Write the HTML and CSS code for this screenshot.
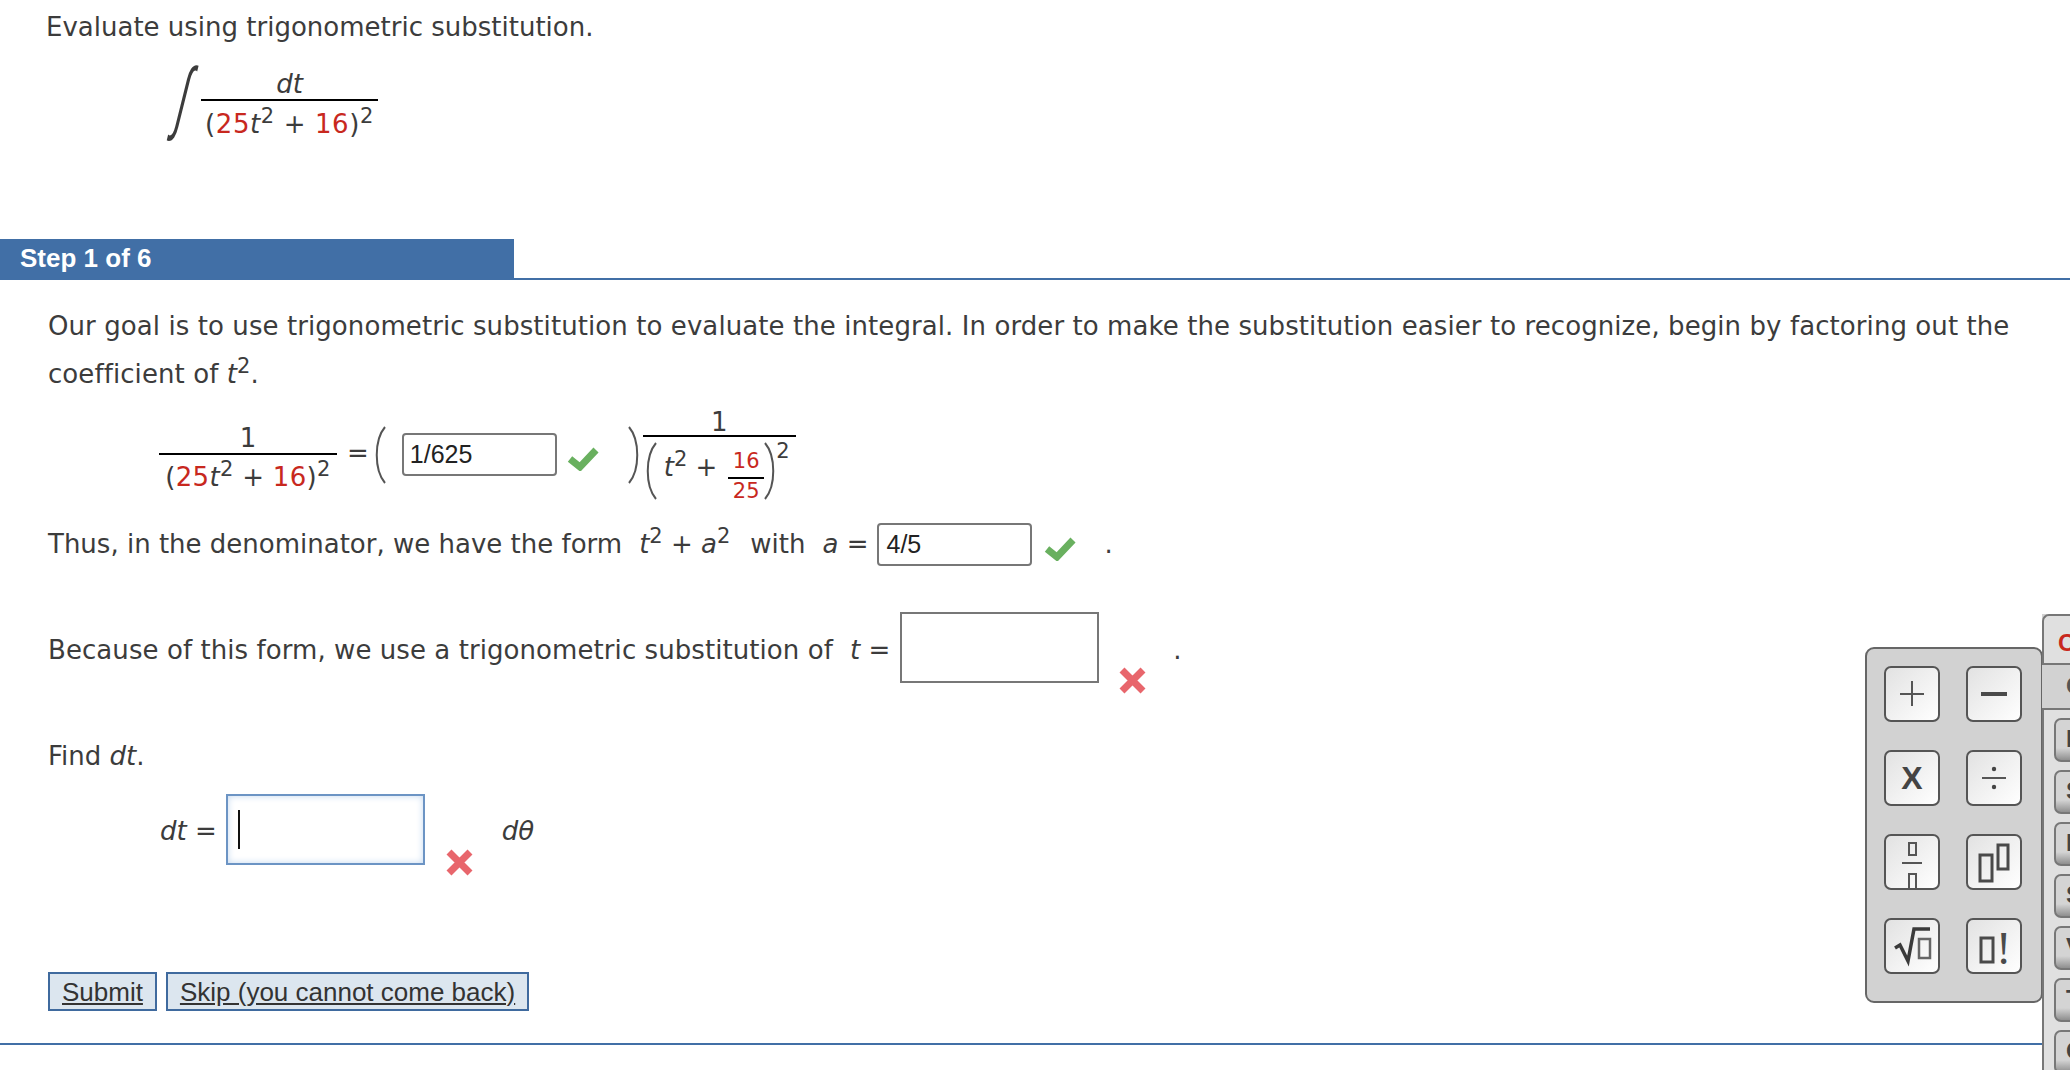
FILE: index.html
```html
<!DOCTYPE html>
<html lang="en">
  <head>
    <meta charset="UTF-8" />
    <meta name="viewport" content="width=device-width, initial-scale=1.0" />
    <title>Evaluate using trigonometric substitution</title>
    <link rel="stylesheet" href="styles.css">
  </head>

  <body>
    <div class="page">
      <p class="prompt">Evaluate using trigonometric substitution.</p>
      <div class="integral-row">
        <span class="integral">∫</span>
        <div class="frac frac-prompt">
          <div class="num"><i>dt</i></div>
          <div class="den">(<span class="red">25</span><i>t</i><sup>2</sup> + <span class="red">16</span>)<sup>2</sup></div>
        </div>
      </div>

      <div class="step-head"><div class="step-title">Step 1 of 6</div></div>

      <p class="goal">Our goal is to use trigonometric substitution to evaluate the integral. In order to make the substitution easier to recognize, begin by factoring out the<br>coefficient of <i>t</i><sup>2</sup>.</p>

      <div class="eq-row">
        <div class="frac frac-left">
          <div class="num">1</div>
          <div class="den">(<span class="red">25</span><i>t</i><sup>2</sup> + <span class="red">16</span>)<sup>2</sup></div>
        </div>
        <span class="equals">=</span>
        <svg class="paren-open" width="12" height="58" viewBox="0 0 12 58"><path d="M11 1 C0 14 0 44 11 57" fill="none" stroke="#555" stroke-width="2"/></svg>
        <div class="answer rounded eq-answer">1/625</div>
        <svg class="check eq-check" width="32" height="25" viewBox="0 0 32 25"><path d="M3 13 L13 21 L29 4" fill="none" stroke="#69b05f" stroke-width="7"/></svg>
        <svg class="paren-close" width="12" height="58" viewBox="0 0 12 58"><path d="M1 1 C12 14 12 44 1 57" fill="none" stroke="#555" stroke-width="2"/></svg>
        <div class="frac frac-right">
          <div class="num">1</div>
          <div class="den den-tall">
            <svg width="12" height="58" viewBox="0 0 12 58"><path d="M11 1 C0 14 0 44 11 57" fill="none" stroke="#555" stroke-width="2"/></svg>
            <span class="den-t"><i>t</i><sup>2</sup></span>
            <span class="den-plus">+</span>
            <div class="frac frac-inner red">
              <div class="num">16</div>
              <div class="den">25</div>
            </div>
            <svg width="12" height="58" viewBox="0 0 12 58"><path d="M1 1 C12 14 12 44 1 57" fill="none" stroke="#555" stroke-width="2"/></svg>
            <span class="den-pow">2</span>
          </div>
        </div>
      </div>

      <div class="line thus-line">
        <span>Thus, in the denominator, we have the form</span>
        <span class="math-t"><i>t</i><sup>2</sup> + <i>a</i><sup>2</sup></span>
        <span class="with">with</span>
        <span class="math-a"><i>a</i> =</span>
        <div class="answer rounded thus-answer">4/5</div>
        <svg class="check thus-check" width="32" height="25" viewBox="0 0 32 25"><path d="M3 13 L13 21 L29 4" fill="none" stroke="#69b05f" stroke-width="7"/></svg>
        <span class="dot thus-dot">.</span>
      </div>

      <div class="line because-line">
        <span class="because-text">Because of this form, we use a trigonometric substitution of</span>
        <span class="math-sub"><i>t</i> =</span>
        <div class="answer blank"></div>
        <svg class="cross cross-sub" width="29" height="27" viewBox="0 0 29 27"><path d="M4 3 L25 24 M25 3 L4 24" stroke="#e8666c" stroke-width="7"/></svg>
        <span class="dot because-dot">.</span>
      </div>

      <p class="find">Find <i>dt</i>.</p>

      <div class="line dt-line">
        <span class="dt-label"><i>dt</i> =</span>
        <div class="answer blank focused"><span class="caret"></span></div>
        <svg class="cross cross-dt" width="29" height="27" viewBox="0 0 29 27"><path d="M4 3 L25 24 M25 3 L4 24" stroke="#e8666c" stroke-width="7"/></svg>
        <span class="dtheta"><i>dθ</i></span>
      </div>

      <div class="actions">
        <button class="action">Submit</button>
        <button class="action">Skip (you cannot come back)</button>
      </div>

      <div class="foot-rule"></div>
    </div>

    <div class="palette">
      <div class="key"><svg width="52" height="52"><path d="M26 13 V38 M14 26 H38" stroke="#555" stroke-width="2"/></svg></div>
      <div class="key"><svg width="52" height="52"><path d="M13 26 H39" stroke="#4a4a4a" stroke-width="4"/></svg></div>
      <div class="key key-x">X</div>
      <div class="key"><svg width="52" height="52"><path d="M14 26 H38" stroke="#555" stroke-width="2"/><circle cx="26" cy="17" r="2.2" fill="#444"/><circle cx="26" cy="35" r="2.2" fill="#444"/></svg></div>
      <div class="key"><svg width="52" height="52"><rect x="23" y="7" width="7" height="12" fill="none" stroke="#555" stroke-width="2"/><path d="M16 27 H36" stroke="#555" stroke-width="2"/><rect x="23" y="38" width="7" height="16" fill="none" stroke="#555" stroke-width="2"/></svg></div>
      <div class="key"><svg width="52" height="52"><rect x="12" y="19" width="12" height="26" fill="none" stroke="#4a4a4a" stroke-width="3"/><rect x="30" y="9" width="10" height="24" fill="none" stroke="#4a4a4a" stroke-width="3"/></svg></div>
      <div class="key"><svg width="52" height="52"><path d="M9 28 L14 25 L22 41 L28 9 H44" fill="none" stroke="#3a3a3a" stroke-width="3.5"/><rect x="33" y="19" width="11" height="19" fill="none" stroke="#666" stroke-width="2.5"/></svg></div>
      <div class="key"><svg width="52" height="52"><rect x="13" y="18" width="12" height="24" fill="none" stroke="#4a4a4a" stroke-width="3"/><text class="bang" x="28" y="44">!</text></svg></div>
    </div>

    <div class="palette-side">
      <div class="side-tab">C</div>
      <div class="side-label">C</div>
      <div class="side-keys">
        <div class="side-key">L</div>
        <div class="side-key">S</div>
        <div class="side-key">L</div>
        <div class="side-key">S</div>
        <div class="side-key">V</div>
        <div class="side-key">T</div>
        <div class="side-key">C</div>
      </div>
    </div>
  </body>
</html>
```

FILE: styles.css
```css
* {
  padding: 0;
  margin: 0;
  box-sizing: border-box;
}

body {
  width: 2070px;
  height: 1070px;
  overflow: hidden;
  position: relative;
  background: white;
  color: #3c3c3c;
  font-family: "DejaVu Sans", sans-serif;
  font-size: 26px;
}

.red {
  color: #c8281e;
}

sup {
  font-size: 21px;
  line-height: 0;
  vertical-align: 10px;
}

.prompt {
  padding: 8px 0 0 46px;
  height: 66px;
  line-height: 38px;
}

.integral-row {
  display: flex;
  height: 173px;
  padding-left: 169px;
}

.integral {
  width: 32px;
  height: 74px;
  font-family: "Liberation Sans", sans-serif;
  font-size: 80px;
  line-height: 62px;
  transform: skewX(-14deg) scaleX(0.45);
}

.frac {
  display: flex;
  flex-direction: column;
  align-items: center;
}

.frac .den {
  border-top: 2px solid black;
}

.frac-prompt {
  width: 177px;
}

.frac-prompt .num {
  height: 33px;
  line-height: 37px;
}

.frac-prompt .den,
.frac-left .den {
  width: 100%;
  text-align: center;
  white-space: nowrap;
}

.frac-prompt .den {
  letter-spacing: 0.6px;
  line-height: 47px;
}

.frac-left .den {
  letter-spacing: 0.3px;
  line-height: 44px;
}

.step-head {
  height: 41px;
  border-bottom: 2px solid #416fa6;
}

.step-title {
  width: 514px;
  height: 41px;
  padding-left: 20px;
  background: #416fa6;
  color: white;
  font-family: "Liberation Sans", sans-serif;
  font-size: 26px;
  font-weight: bold;
  line-height: 39px;
}

.goal {
  padding: 22px 0 0 48px;
  height: 126px;
  line-height: 48px;
  letter-spacing: 0.08px;
}

.eq-row {
  display: flex;
  align-items: flex-start;
  height: 108px;
  padding-left: 159px;
}

.frac-left {
  width: 178px;
  margin-top: 8px;
}

.frac-left .num {
  height: 39px;
  line-height: 48px;
}

.equals {
  margin: 32px 0 0 10px;
  line-height: 30px;
}

.paren-open {
  margin: 20px 0 0 5px;
}

.answer {
  background: white;
  border: 2px solid #777;
  color: #222;
  font-family: "Liberation Sans", sans-serif;
  font-size: 25px;
}

.rounded {
  height: 43px;
  width: 155px;
  flex: none;
  padding-left: 8px;
  border-radius: 4px;
  line-height: 39px;
}

.eq-answer {
  margin: 27px 0 0 16px;
  padding-left: 6px;
}

.eq-check {
  margin: 40px 0 0 10px;
}

.paren-close {
  margin: 20px 0 0 29px;
}

.frac-right {
  width: 153px;
  margin: 0 0 0 3px;
}

.frac-right .num {
  height: 29px;
  line-height: 32px;
}

.den-tall {
  display: flex;
  width: 100%;
  height: 68px;
  padding: 5px 0 0 2px;
}

.den-t {
  margin-left: 7px;
  line-height: 50px;
}

.den-plus {
  margin-left: 8px;
  line-height: 50px;
}

.frac-inner {
  width: 36px;
  margin: 9px 0 0 11px;
  font-size: 21px;
}

.frac-inner .num {
  height: 27px;
  line-height: 21px;
}

.frac-inner .den {
  width: 100%;
  text-align: center;
  line-height: 24px;
}

.den-pow {
  font-size: 21px;
  line-height: 20px;
  margin-top: -1px;
}

.line {
  display: flex;
  align-items: flex-start;
  padding-left: 48px;
}

.thus-line {
  height: 89px;
  margin-top: 9px;
}

.thus-line span {
  line-height: 42px;
}

.math-t {
  margin-left: 17px;
}

.with {
  margin-left: 20px;
}

.math-a {
  margin-left: 17px;
}

.thus-answer {
  margin-left: 8px;
}

.thus-check {
  margin: 13px 0 0 12px;
}

.thus-dot {
  margin-left: 29px;
}

.because-line {
  height: 106px;
}

.because-line span {
  margin-top: 17px;
  line-height: 42px;
}

.because-text {
  letter-spacing: 0.07px;
}

.math-sub {
  margin-left: 17px;
}

.blank {
  width: 199px;
  height: 71px;
  flex: none;
}

.because-line .blank {
  margin-left: 10px;
}

.cross-sub {
  margin: 55px 0 0 19px;
}

.because-line .because-dot {
  margin-left: 26px;
}

.find {
  padding: 17px 0 0 48px;
  height: 76px;
  line-height: 42px;
}

.dt-line {
  padding-left: 160px;
  height: 178px;
}

.dt-label {
  margin-top: 16px;
  line-height: 42px;
}

.focused {
  margin-left: 9px;
  padding: 14px 0 0 10px;
  border-color: #6c94c4;
  box-shadow: inset 0 0 7px #c4d8ef;
}

.caret {
  display: block;
  width: 2px;
  height: 39px;
  background: #111;
}

.cross-dt {
  margin: 55px 0 0 20px;
}

.dtheta {
  margin: 16px 0 0 28px;
  line-height: 42px;
}

.check,
.cross {
  flex: none;
  filter: blur(0.5px);
}

.actions {
  display: flex;
  gap: 9px;
  padding-left: 48px;
  height: 71px;
}

.action {
  height: 39px;
  padding: 0 12px;
  background: #dce6ef;
  border: 2px solid #3f6a9e;
  color: #333;
  font-family: "Liberation Sans", sans-serif;
  font-size: 26px;
  line-height: 34px;
  text-decoration: underline;
}

.foot-rule {
  height: 2px;
  background: #416fa6;
}

.palette {
  position: absolute;
  left: 1865px;
  top: 647px;
  width: 178px;
  height: 356px;
  padding: 17px 0 0 17px;
  display: grid;
  grid-template-columns: 56px 56px;
  grid-auto-rows: 56px;
  gap: 28px 26px;
  background: #d2d2d2;
  border: 2px solid #666;
  border-radius: 9px;
}

.key {
  display: flex;
  justify-content: center;
  align-items: center;
  overflow: hidden;
  background: linear-gradient(135deg, #e2e2e2, white);
  border: 2px solid #555;
  border-radius: 7px;
}

.key-x {
  color: #444;
  font-family: "Liberation Sans", sans-serif;
  font-size: 32px;
  font-weight: bold;
}

.bang {
  fill: #4a4a4a;
  font-family: "Liberation Serif", serif;
  font-size: 46px;
}

.palette-side {
  position: absolute;
  left: 2042px;
  top: 614px;
  width: 28px;
  height: 456px;
  overflow: hidden;
  background: #d2d2d2;
  font-family: "Liberation Sans", sans-serif;
}

.side-tab {
  height: 51px;
  padding-left: 14px;
  background: #e0e0e0;
  border: 2px solid #777;
  border-right: none;
  border-radius: 7px 0 0 0;
  color: #c8281e;
  font-size: 24px;
  font-weight: bold;
  line-height: 54px;
  white-space: nowrap;
}

.side-label {
  height: 43px;
  padding-left: 24px;
  color: #555;
  font-size: 24px;
  font-weight: bold;
  line-height: 42px;
}

.side-keys {
  height: 362px;
  padding: 8px 0 0 10px;
  background: #e0e0e0;
  border: 2px solid #777;
  border-right: none;
  border-bottom: none;
}

.side-key {
  width: 40px;
  height: 44px;
  margin-bottom: 8px;
  padding-left: 10px;
  background: linear-gradient(#d4d4d4 70%, #8f8f8f);
  border: 2px solid #777;
  border-radius: 7px;
  color: #444;
  font-size: 24px;
  font-weight: bold;
  line-height: 38px;
}
```
